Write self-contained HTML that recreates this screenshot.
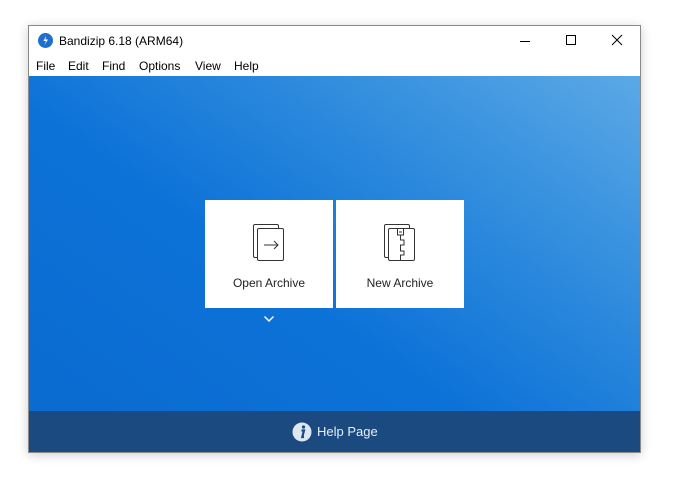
<!DOCTYPE html>
<html><head><style>
*{margin:0;padding:0;box-sizing:border-box}
body{width:683px;height:486px;background:#fff;position:relative;overflow:hidden;font-family:"Segoe UI","Liberation Sans",sans-serif}
.win{position:absolute;left:28px;top:25px;width:613px;height:428px;border:1px solid #8a8a8a;background:#fff;box-shadow:0 2px 10px rgba(0,0,0,.2)}
.title{position:absolute;left:0;top:0;width:100%;height:30px;font-size:12px;color:#000}
.title .t{position:absolute;left:30px;top:8px}
.logo{position:absolute;left:9px;top:7px;width:15px;height:15px;border-radius:50%;background:#1e6fd0}
.menu{position:absolute;left:0;top:31px;height:20px;font-size:12px;width:100%}
.menu span{position:absolute;top:2px}
.main{position:absolute;left:0;top:50px;width:611px;height:335px;background:linear-gradient(215deg,#5ba9e6 0%,#2a88dc 35%,#0d72d8 60%,#0a6bd0 100%)}
.foot{position:absolute;left:0;top:385px;width:611px;height:41px;background:#1b4a80;color:#e6eef7;font-size:13px}
.card{position:absolute;top:124px;width:128px;height:108px;background:#fff;font-size:12px;color:#222;text-align:center}
.card .l{position:absolute;top:76px;width:100%}
.card svg{position:absolute;left:47px;top:23px}
</style></head><body>
<div class="win">
<div class="title"><div class="logo"><svg width="15" height="15"><path d="M8 3 L5.5 8 H8 L6.5 12 L10 6.5 H7.5 Z" fill="#fff"/></svg></div><span class="t">Bandizip 6.18 (ARM64)</span>
<svg style="position:absolute;left:490px;top:9px" width="12" height="12"><path d="M1 6.5H11" stroke="#000"/></svg>
<svg style="position:absolute;left:536px;top:8px" width="12" height="12"><rect x="1.5" y="1.5" width="9" height="9" fill="none" stroke="#000"/></svg>
<svg style="position:absolute;left:582px;top:8px" width="12" height="12"><path d="M1 1L11 11M11 1L1 11" stroke="#000"/></svg>
</div>
<div class="menu"><span style="left:7px">File</span><span style="left:39px">Edit</span><span style="left:73px">Find</span><span style="left:110px">Options</span><span style="left:166px">View</span><span style="left:205px">Help</span></div>
<div class="main">
<div class="card" style="left:176px"><svg width="36" height="40"><rect x="1.5" y="1.5" width="25" height="33" rx="1.5" fill="#fff" stroke="#333"/><rect x="5.5" y="5.5" width="26" height="32" rx="1.5" fill="#fff" stroke="#333"/><path d="M12 22H26M22 18L26 22L22 26" fill="none" stroke="#333"/></svg><div class="l">Open Archive</div></div>
<div class="card" style="left:307px"><svg width="36" height="40"><rect x="1.5" y="1.5" width="25" height="33" rx="1.5" fill="#fff" stroke="#333"/><rect x="5.5" y="5.5" width="26" height="32" rx="1.5" fill="#fff" stroke="#333"/><path d="M14.5 5.5V12H20.5V5.5M16 9H19M17.5 12V17H21V22H17.5V28H21V32H17.5V37.5" fill="none" stroke="#333"/></svg><div class="l">New Archive</div></div>
<svg style="position:absolute;left:234px;top:239px" width="12" height="8"><path d="M1.5 1.5L6 6L10.5 1.5" fill="none" stroke="#fff" stroke-width="1.5"/></svg>
</div>
<div class="foot"><svg style="position:absolute;left:263px;top:11px" width="20" height="20"><circle cx="10" cy="10" r="9.5" fill="#dde7f2"/><circle cx="11.5" cy="5" r="1.6" fill="#1b4a80"/><path d="M9.5 8.5H12L10.3 15H12" fill="none" stroke="#1b4a80" stroke-width="2.2"/></svg><span style="position:absolute;left:288px;top:13px">Help Page</span></div>
</div>
</body></html>
